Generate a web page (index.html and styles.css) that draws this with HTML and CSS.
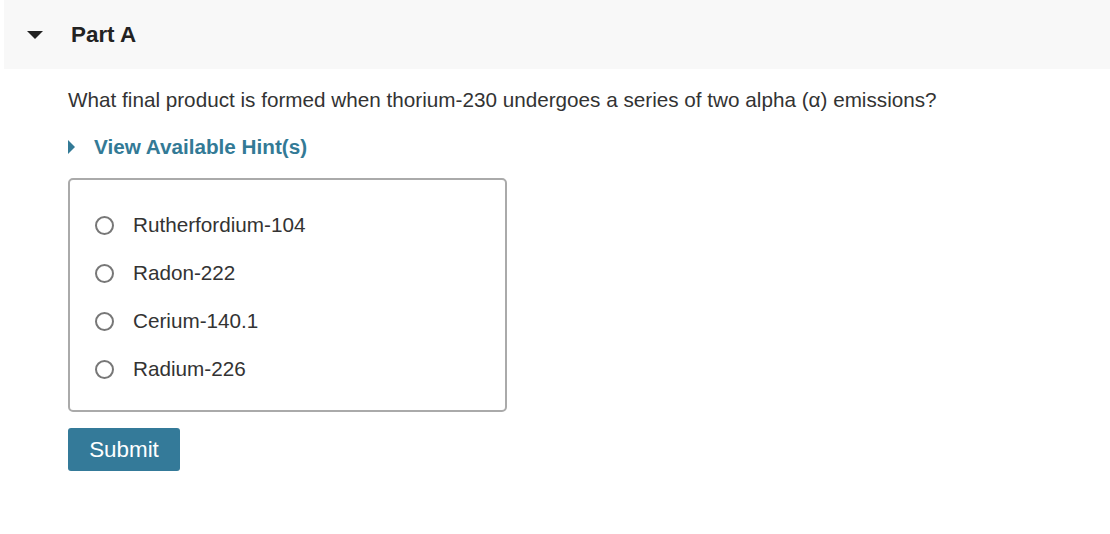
FILE: index.html
```html
<!DOCTYPE html>
<html lang="en">
  <head>
    <meta charset="UTF-8" />
    <meta name="viewport" content="width=device-width, initial-scale=1.0" />
    <title>Part A</title>
    <link rel="stylesheet" href="styles.css">
  </head>

  <body>
    <div class="part-header">
      <span class="caret-down"></span>
      <h2 class="part-title">Part A</h2>
    </div>
    <div class="part-body">
      <p class="question">What final product is formed when thorium-230 undergoes a series of two alpha (&alpha;) emissions?</p>
      <div class="hint-link">
        <span class="caret-right"></span>
        <span>View Available Hint(s)</span>
      </div>
      <div class="choices">
        <label class="choice"><span class="radio"></span>Rutherfordium-104</label>
        <label class="choice"><span class="radio"></span>Radon-222</label>
        <label class="choice"><span class="radio"></span>Cerium-140.1</label>
        <label class="choice"><span class="radio"></span>Radium-226</label>
      </div>
      <button class="submit-btn">Submit</button>
    </div>
  </body>
</html>
```

FILE: styles.css
```css
body {
  margin: 0;
  font-family: "Liberation Sans", Arial, Helvetica, sans-serif;
  color: #333;
  background: #fff;
}

.part-header {
  display: flex;
  align-items: center;
  height: 69px;
  margin-left: 4px;
  background-color: #f8f8f8;
}

.caret-down {
  width: 0;
  height: 0;
  margin-left: 23px;
  border-left: 8.5px solid transparent;
  border-right: 8.5px solid transparent;
  border-top: 8px solid #222;
}

.part-title {
  margin: 0 0 0 28px;
  font-size: 22.4px;
  font-weight: bold;
  color: #222;
}

.part-body {
  padding: 0 68px;
}

.question {
  margin: 19px 0 0;
  font-size: 20.7px;
  line-height: 24px;
}

.hint-link {
  display: flex;
  align-items: center;
  margin-top: 23px;
  font-size: 20.7px;
  line-height: 24px;
  font-weight: bold;
  color: #337a96;
}

.caret-right {
  width: 0;
  height: 0;
  margin-right: 19px;
  border-top: 7.5px solid transparent;
  border-bottom: 7.5px solid transparent;
  border-left: 7.5px solid #337a96;
}

.choices {
  display: flex;
  flex-direction: column;
  gap: 24px;
  box-sizing: border-box;
  width: 439px;
  margin-top: 19px;
  padding: 33px 24px 29px;
  border: 2px solid #aaa;
  border-radius: 5px;
}

.choice {
  display: flex;
  align-items: center;
  height: 24px;
  font-size: 20.7px;
}

.radio {
  box-sizing: border-box;
  width: 19px;
  height: 19px;
  margin-left: 1px;
  margin-right: 19px;
  border: 2px solid #777;
  border-radius: 50%;
}

.submit-btn {
  display: block;
  width: 112px;
  height: 43px;
  margin-top: 16px;
  padding: 0;
  border: none;
  border-radius: 3px;
  background-color: #347a99;
  color: #fff;
  font-family: inherit;
  font-size: 22.4px;
}
```
